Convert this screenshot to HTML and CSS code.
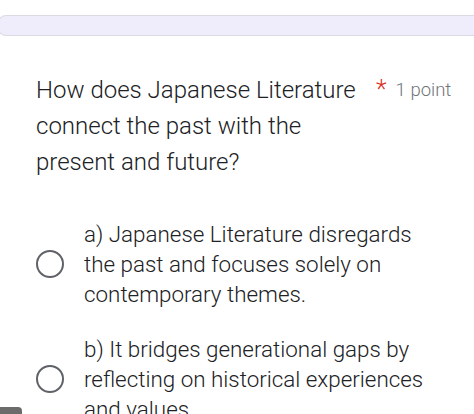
FILE: index.html
```html
<!DOCTYPE html>
<html lang="en">
<head>
    <meta charset="UTF-8">
    <meta name="viewport" content="width=device-width, initial-scale=1.0">
    <title>Quiz</title>
    <link rel="stylesheet" href="styles.css">
</head>
<body>
    <div class="prev-card"></div>
    <div class="question">
        <div class="question-head">
            <div class="question-title">How does Japanese Literature connect the past with the present and future?</div>
            <span class="required">*</span>
            <span class="points">1 point</span>
        </div>
        <div class="options">
            <label class="option">
                <span class="radio"></span>
                <span class="option-text">a) Japanese Literature disregards the past and focuses solely on contemporary themes.</span>
            </label>
            <label class="option">
                <span class="radio"></span>
                <span class="option-text">b) It bridges generational gaps by reflecting on historical experiences and values.</span>
            </label>
        </div>
    </div>
    <div class="side-tab"></div>
</body>
</html>
```

FILE: styles.css
```css
body {
    margin: 0;
    background-color: #fff;
    font-family: Roboto, "Noto Sans", sans-serif;
    font-weight: 300;
    color: #202124;
    overflow: hidden;
}
.prev-card {
    margin-top: 15px;
    height: 19px;
    background-color: #efedfb;
    border-top: 1px solid #dcdbe3;
    border-bottom: 1px solid #dcdbe3;
    border-left: 1px solid #dcdbe3;
    border-radius: 8px 0 0 8px;
    margin-left: -2px;
}
.question {
    padding: 36px 0 0 36px;
}
.question-head {
    display: flex;
    align-items: flex-start;
}
.question-title {
    width: 340px;
    font-size: 24px;
    line-height: 36px;
}
.required {
    color: #d93025;
    font-size: 25px;
    line-height: 36px;
}
.points {
    color: #70757a;
    font-size: 18.5px;
    line-height: 36px;
    margin-left: 9px;
}
.options {
    margin-top: 39px;
    display: flex;
    flex-direction: column;
    gap: 25px;
}
.option {
    display: flex;
    align-items: center;
}
.radio {
    width: 24px;
    height: 24px;
    border: 2.5px solid #5f6368;
    border-radius: 50%;
    flex-shrink: 0;
}
.option-text {
    margin-left: 20px;
    width: 350px;
    font-size: 22.4px;
    line-height: 30px;
}
.side-tab {
    position: absolute;
    left: -8px;
    top: 407px;
    width: 30px;
    height: 20px;
    background-color: #6b6b6b;
    border-radius: 4px;
}
```
